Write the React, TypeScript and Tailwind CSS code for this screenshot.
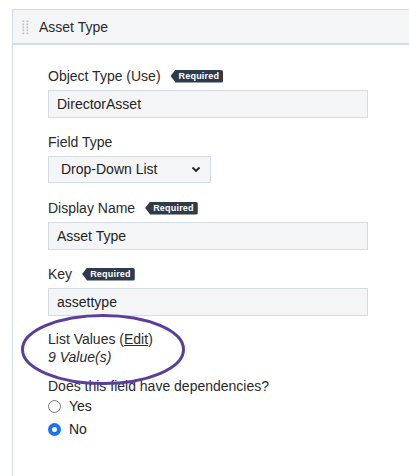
import React from "react";

function Badge() {
  return (
    <span className="ml-[10px] inline-flex h-[13px] items-center bg-[#2f3a4b] pl-[8px] pr-[4px] text-[9px] font-bold leading-none tracking-[0.2px] text-white rounded-r-[2px] [clip-path:polygon(5px_0,100%_0,100%_100%,5px_100%,0_50%)]">
      Required
    </span>
  );
}

function Label({ children, req }: { children: React.ReactNode; req?: boolean }) {
  return (
    <div className="flex h-[20px] items-center text-[14px] text-[#2a2a2a]">
      <span>{children}</span>
      {req && <Badge />}
    </div>
  );
}

function TextBox({ value }: { value: string }) {
  return (
    <div className="mt-[4px] flex h-[28px] w-[320px] items-center border border-[#d3dbe3] bg-[#f4f5f7] pl-[8px] text-[14px] text-[#222]">
      {value}
    </div>
  );
}

function Radio({ checked, label }: { checked?: boolean; label: string }) {
  return (
    <div className="flex h-[23px] items-center gap-[8px] text-[14px] text-[#222]">
      {checked ? (
        <span className="flex h-[13px] w-[13px] items-center justify-center rounded-full bg-[#1a73f5]">
          <span className="h-[5px] w-[5px] rounded-full bg-white" />
        </span>
      ) : (
        <span className="h-[13px] w-[13px] rounded-full border border-[#767676] bg-white" />
      )}
      <span>{label}</span>
    </div>
  );
}

export default function App() {
  return (
    <div className="relative h-[476px] w-[409px] overflow-hidden bg-white pl-[12px] pt-[9px] font-['Liberation_Sans',Arial,sans-serif]">
      <div className="h-full border-l border-t border-[#d5dde5]">
        <div className="flex h-[35px] items-center border-b-2 border-[#d5dde5] bg-[#f4f5f7] pl-[9px] pt-[1px]">
          <svg width="7" height="15" viewBox="0 0 7 15" className="mr-[10px]">
            {[0, 1, 2, 3, 4].map((r) => (
              <g key={r} fill="#b9bec5">
                <rect x="0.5" y={r * 3 + 0.5} width="1.7" height="1.7" />
                <rect x="4.5" y={r * 3 + 0.5} width="1.7" height="1.7" />
              </g>
            ))}
          </svg>
          <span className="text-[14px] text-[#2a2a2a]">Asset Type</span>
        </div>
        <div className="pl-[35px] pt-[21px]">
          <Label req>Object Type (Use)</Label>
          <TextBox value="DirectorAsset" />

          <div className="mt-[14px]">
            <Label>Field Type</Label>
            <div className="mt-[4px] flex h-[27px] w-[163px] items-center justify-between border border-[#d3dbe3] bg-[#f4f5f7] pl-[12px] pr-[9px] text-[14px] text-[#222]">
              <span>Drop-Down List</span>
              <svg width="10" height="7" viewBox="0 0 10 7">
                <path d="M1.5 1.5 L5 5 L8.5 1.5" fill="none" stroke="#222" strokeWidth="1.8" />
              </svg>
            </div>
          </div>

          <div className="mt-[15px]">
            <Label req>Display Name</Label>
            <TextBox value="Asset Type" />
          </div>

          <div className="mt-[14px]">
            <Label req>Key</Label>
            <TextBox value="assettype" />
          </div>

          <div className="mt-[14px] text-[14px] leading-[18px] text-[#2a2a2a]">
            <div>
              List Values (<span className="underline">Edit</span>)
            </div>
            <div className="italic">9 Value(s)</div>
          </div>

          <div className="mt-[10px]">
            <Label>Does this field have dependencies?</Label>
            <div className="-mt-[1px]">
              <Radio label="Yes" />
              <Radio checked label="No" />
            </div>
          </div>
        </div>
      </div>

      <svg
        className="pointer-events-none absolute left-[19px] top-[312px]"
        width="168"
        height="76"
        viewBox="0 0 168 76"
      >
        <ellipse
          cx="84"
          cy="37.5"
          rx="80.5"
          ry="34"
          fill="none"
          stroke="#5b3d9c"
          strokeWidth="3"
          style={{ filter: "blur(0.5px)" }}
        />
      </svg>
    </div>
  );
}
